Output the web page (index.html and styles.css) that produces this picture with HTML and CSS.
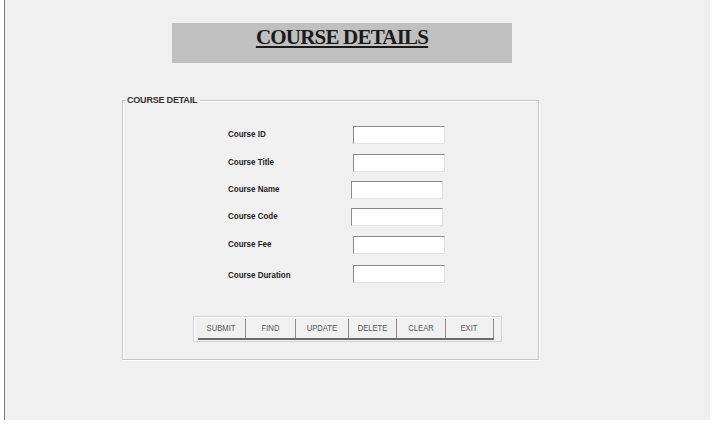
FILE: index.html
```html
<!DOCTYPE html>
<html>
<head>
<meta charset="utf-8">
<link rel="stylesheet" href="styles.css">
</head>
<body>
<div class="panel">
  <div class="header"><h1 class="title">COURSE DETAILS</h1></div>
  <div class="group">
    <span class="legend">COURSE DETAIL</span>
    <div class="rows">
      <div class="row"><span class="label"><span class="txt">Course ID</span></span><span class="input"></span></div>
      <div class="row r2"><span class="label"><span class="txt">Course Title</span></span><span class="input"></span></div>
      <div class="row r3"><span class="label"><span class="txt">Course Name</span></span><span class="input shift"></span></div>
      <div class="row r4"><span class="label"><span class="txt">Course Code</span></span><span class="input shift"></span></div>
      <div class="row r5"><span class="label"><span class="txt">Course Fee</span></span><span class="input"></span></div>
      <div class="row r6"><span class="label"><span class="txt">Course Duration</span></span><span class="input"></span></div>
    </div>
    <div class="bar">
      <div class="buttons">
        <span class="btn b1"><span class="btxt">SUBMIT</span></span>
        <span class="btn b2"><span class="btxt">FIND</span></span>
        <span class="btn b3"><span class="btxt">UPDATE</span></span>
        <span class="btn b4"><span class="btxt">DELETE</span></span>
        <span class="btn b5"><span class="btxt">CLEAR</span></span>
        <span class="btn b6"><span class="btxt">EXIT</span></span>
      </div>
    </div>
  </div>
</div>
</body>
</html>
```

FILE: styles.css
```css
html, body {
  margin: 0;
  padding: 0;
  background: #ffffff;
}
.panel {
  margin-left: 4px;
  width: 705px;
  height: 420px;
  background: #f0f0f0;
  border-left: 1px solid #7a7a7a;
  display: flex;
  flex-direction: column;
  overflow: hidden;
}
.header {
  margin-top: 23px;
  margin-left: 167px;
  width: 340px;
  height: 40px;
  background: #c0c0c0;
  display: flex;
  justify-content: center;
}
.title {
  margin: 2px 0 0 0;
  font-family: "Liberation Serif", "Times New Roman", serif;
  font-weight: bold;
  font-size: 21px;
  letter-spacing: -0.8px;
  line-height: 24px;
  color: #1a1a1a;
  text-decoration: underline;
  text-decoration-thickness: 2px;
  text-underline-offset: 2px;
}
.group {
  position: relative;
  margin-top: 37px;
  margin-left: 117px;
  width: 415px;
  height: 258px;
  border: 1px solid #c4c4c4;
  box-shadow: 1px 1px 0 #ffffff, inset 1px 1px 0 #ffffff;
}
.legend {
  position: absolute;
  top: -6px;
  left: 3px;
  padding: 0 3px 0 1px;
  background: #f0f0f0;
  font-family: "Liberation Sans", Arial, sans-serif;
  font-weight: bold;
  font-size: 9px;
  line-height: 11px;
  color: #333;
  letter-spacing: -0.2px;
}
.rows {
  margin-top: 25px;
  margin-left: 105px;
  display: flex;
  flex-direction: column;
  gap: 10px;
}
.row {
  display: flex;
  align-items: center;
  height: 18px;
}
.r3, .r4 { margin-top: -1px; }
.r6 { margin-top: 1px; }
.label {
  width: 125px;
  font-family: "Liberation Sans", Arial, sans-serif;
  font-weight: bold;
  font-size: 9.5px;
  color: #222;
  position: relative;
  top: -2px;
}
.txt {
  display: inline-block;
  transform: scaleX(0.84);
  transform-origin: left center;
  white-space: nowrap;
}
.r6 .label { top: 0; }
.input {
  width: 90px;
  height: 16px;
  background: #ffffff;
  border-top: 1px solid #8a8a8a;
  border-left: 1px solid #8a8a8a;
  border-right: 1px solid #e2e2e2;
  border-bottom: 1px solid #e2e2e2;
}
.input.shift { margin-left: -2px; }
.bar {
  margin-top: 33px;
  margin-left: 70px;
  width: 303px;
  height: 24px;
  border: 1px solid #d4d4d4;
  box-shadow: inset 1px 1px 0 #ffffff;
  display: flex;
  align-items: center;
  padding-left: 4px;
}
.buttons {
  display: flex;
  height: 19px;
  border-bottom: 2px solid #6a6a6a;
}
.btn {
  height: 19px;
  display: flex;
  align-items: center;
  justify-content: center;
  border-right: 1px solid #8a8a8a;
  font-family: "Liberation Sans", Arial, sans-serif;
  font-size: 9px;
  color: #555;
}
.btxt {
  display: inline-block;
  transform: scaleX(0.85);
  white-space: nowrap;
}
.b1 { width: 47px; }
.b2 { width: 49px; }
.b3 { width: 52px; }
.b4 { width: 47px; }
.b5 { width: 48px; }
.b6 { width: 47px; }
```
